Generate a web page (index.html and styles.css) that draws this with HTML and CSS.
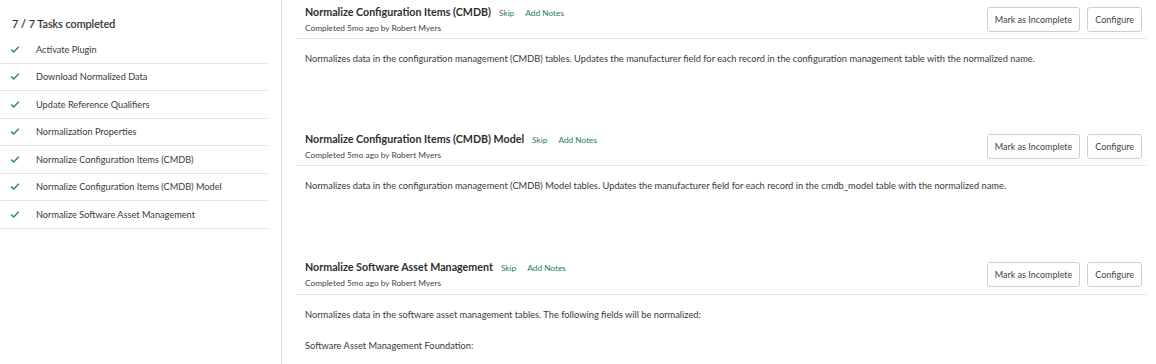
FILE: index.html
```html
<!DOCTYPE html>
<html lang="en">
<head>
  <meta charset="UTF-8">
  <link rel="stylesheet" href="styles.css">
  <title>Normalization Tasks</title>
</head>
<body>
  <aside class="sidebar">
    <h2 class="progress">7 / 7 Tasks completed</h2>
    <ul class="task-list">
      <li class="task"><svg class="check" viewBox="0 0 12 10"><path d="M1.5 5.2 L4.5 8 L10.5 1.8"/></svg>Activate Plugin</li>
      <li class="task"><svg class="check" viewBox="0 0 12 10"><path d="M1.5 5.2 L4.5 8 L10.5 1.8"/></svg>Download Normalized Data</li>
      <li class="task"><svg class="check" viewBox="0 0 12 10"><path d="M1.5 5.2 L4.5 8 L10.5 1.8"/></svg>Update Reference Qualifiers</li>
      <li class="task"><svg class="check" viewBox="0 0 12 10"><path d="M1.5 5.2 L4.5 8 L10.5 1.8"/></svg>Normalization Properties</li>
      <li class="task"><svg class="check" viewBox="0 0 12 10"><path d="M1.5 5.2 L4.5 8 L10.5 1.8"/></svg>Normalize Configuration Items (CMDB)</li>
      <li class="task"><svg class="check" viewBox="0 0 12 10"><path d="M1.5 5.2 L4.5 8 L10.5 1.8"/></svg>Normalize Configuration Items (CMDB) Model</li>
      <li class="task"><svg class="check" viewBox="0 0 12 10"><path d="M1.5 5.2 L4.5 8 L10.5 1.8"/></svg>Normalize Software Asset Management</li>
    </ul>
  </aside>

  <main class="tasks">
    <section class="step">
      <div class="step-head">
        <div class="step-info">
          <div class="step-title">
            <h3>Normalize Configuration Items (CMDB)</h3>
            <a class="link" href="#">Skip</a>
            <a class="link" href="#">Add Notes</a>
          </div>
          <div class="meta">Completed 5mo ago by Robert Myers</div>
        </div>
        <div class="actions">
          <button class="btn">Mark as Incomplete</button>
          <button class="btn">Configure</button>
        </div>
      </div>
      <p class="desc">Normalizes data in the configuration management (CMDB) tables. Updates the manufacturer field for each record in the configuration management table with the normalized name.</p>
    </section>

    <section class="step">
      <div class="step-head">
        <div class="step-info">
          <div class="step-title">
            <h3>Normalize Configuration Items (CMDB) Model</h3>
            <a class="link" href="#">Skip</a>
            <a class="link" href="#">Add Notes</a>
          </div>
          <div class="meta">Completed 5mo ago by Robert Myers</div>
        </div>
        <div class="actions">
          <button class="btn">Mark as Incomplete</button>
          <button class="btn">Configure</button>
        </div>
      </div>
      <p class="desc">Normalizes data in the configuration management (CMDB) Model tables. Updates the manufacturer field for each record in the cmdb_model table with the normalized name.</p>
    </section>

    <section class="step step-last">
      <div class="step-head">
        <div class="step-info">
          <div class="step-title">
            <h3>Normalize Software Asset Management</h3>
            <a class="link" href="#">Skip</a>
            <a class="link" href="#">Add Notes</a>
          </div>
          <div class="meta">Completed 5mo ago by Robert Myers</div>
        </div>
        <div class="actions">
          <button class="btn">Mark as Incomplete</button>
          <button class="btn">Configure</button>
        </div>
      </div>
      <p class="desc">Normalizes data in the software asset management tables. The following fields will be normalized:</p>
      <p class="desc">Software Asset Management Foundation:</p>
    </section>
  </main>
</body>
</html>
```

FILE: styles.css
```css
body {
  margin: 0;
  display: flex;
  height: 100vh;
  overflow: hidden;
  font-family: Lato, 'Liberation Sans', sans-serif;
  color: #333;
  background: #fff;
}

.sidebar {
  width: 281px;
  flex: none;
  border-right: 1px solid #dcdcdc;
}
.progress {
  margin: 0;
  padding: 16px 0 0 12px;
  height: 20px;
  line-height: 16px;
  font-size: 10.8px;
  font-weight: normal;
  color: #2e2e2e;
  -webkit-text-stroke: 0.2px #2e2e2e;
}
.task-list {
  list-style: none;
  margin: 0;
  padding: 0;
  width: 268px;
}
.task {
  display: flex;
  align-items: center;
  height: 26.5px;
  border-bottom: 1px solid #e4e4e4;
  font-size: 9.2px;
  color: #3a3a3a;
}
.check {
  width: 10px;
  height: 9px;
  margin: 0 16px 0 10px;
  fill: none;
  stroke: #2f8a66;
  stroke-width: 1.8;
}

.tasks {
  flex: 1;
  padding: 0 10px 0 14px;
}
.step {
  height: 127px;
}
.step-head {
  display: flex;
  align-items: center;
  justify-content: space-between;
  height: 38px;
  border-bottom: 1px solid #e6e6e6;
  padding-left: 9px;
}
.step-title {
  display: flex;
  align-items: baseline;
  gap: 11px;
}
.step-title h3 {
  margin: 0 -3px 0 0;
  font-size: 10.7px;
  font-weight: bold;
  color: #2e2e2e;
  line-height: 16px;
}
.link {
  font-size: 8.3px;
  color: #2b7a5c;
  text-decoration: none;
}
.meta {
  font-size: 8.3px;
  color: #444;
  line-height: 14px;
  margin-top: 1px;
}
.actions {
  display: flex;
  gap: 7px;
  padding-right: 4px;
}
.btn {
  height: 25px;
  padding: 0 7px;
  font-family: inherit;
  font-size: 9px;
  color: #444;
  background: #fff;
  border: 1px solid #cfcfcf;
  border-radius: 3px;
}
.desc {
  margin: 13px 0 0 9px;
  font-size: 9.3px;
  line-height: 14px;
  color: #3a3a3a;
}
.step-last .step-head {
  height: 40px;
}
.desc + .desc {
  margin-top: 17px;
}
```
